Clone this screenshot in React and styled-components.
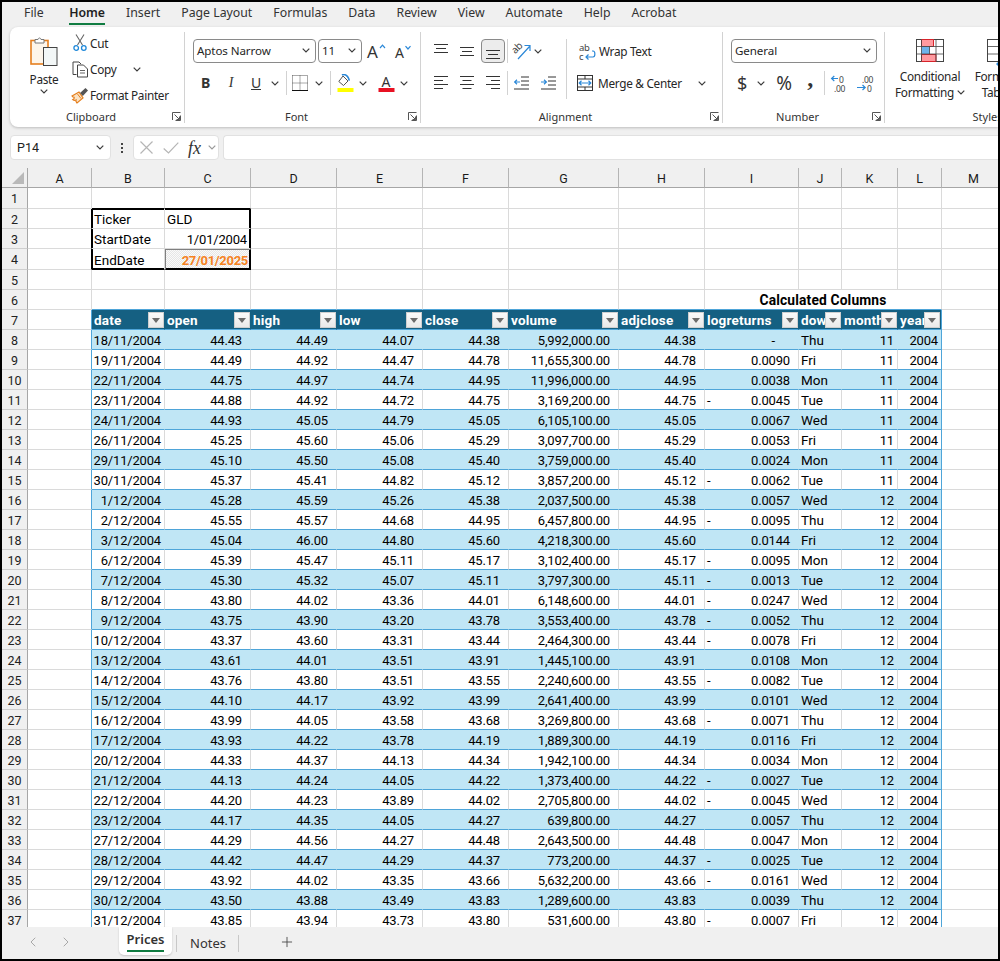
import React from "react";
import styled, { createGlobalStyle } from "styled-components";
import { ChevronLeft, ChevronRight, Plus } from "lucide-react";

const GRID = "26px 64px 73px 86px 86px 86px 86px 110px 86px 94px 43px 56px 44px 64px";
const LETTERS = "ABCDEFGHIJKLM".split("");
const HEADERS = ["date", "open", "high", "low", "close", "volume", "adjclose", "logreturns", "dow", "month", "year"];
const TABLE_LINE = "#4ea5d9";
const GRID_LINE = "#dadada";

// date|open|high|low|close|volume|logreturn|dow  (adjclose is the same as close here)
const DATA = `18/11/2004|44.43|44.49|44.07|44.38|5,992,000.00||Thu
19/11/2004|44.49|44.92|44.47|44.78|11,655,300.00|0.0090|Fri
22/11/2004|44.75|44.97|44.74|44.95|11,996,000.00|0.0038|Mon
23/11/2004|44.88|44.92|44.72|44.75|3,169,200.00|-0.0045|Tue
24/11/2004|44.93|45.05|44.79|45.05|6,105,100.00|0.0067|Wed
26/11/2004|45.25|45.60|45.06|45.29|3,097,700.00|0.0053|Fri
29/11/2004|45.10|45.50|45.08|45.40|3,759,000.00|0.0024|Mon
30/11/2004|45.37|45.41|44.82|45.12|3,857,200.00|-0.0062|Tue
1/12/2004|45.28|45.59|45.26|45.38|2,037,500.00|0.0057|Wed
2/12/2004|45.55|45.57|44.68|44.95|6,457,800.00|-0.0095|Thu
3/12/2004|45.04|46.00|44.80|45.60|4,218,300.00|0.0144|Fri
6/12/2004|45.39|45.47|45.11|45.17|3,102,400.00|-0.0095|Mon
7/12/2004|45.30|45.32|45.07|45.11|3,797,300.00|-0.0013|Tue
8/12/2004|43.80|44.02|43.36|44.01|6,148,600.00|-0.0247|Wed
9/12/2004|43.75|43.90|43.20|43.78|3,553,400.00|-0.0052|Thu
10/12/2004|43.37|43.60|43.31|43.44|2,464,300.00|-0.0078|Fri
13/12/2004|43.61|44.01|43.51|43.91|1,445,100.00|0.0108|Mon
14/12/2004|43.76|43.80|43.51|43.55|2,240,600.00|-0.0082|Tue
15/12/2004|44.10|44.17|43.92|43.99|2,641,400.00|0.0101|Wed
16/12/2004|43.99|44.05|43.58|43.68|3,269,800.00|-0.0071|Thu
17/12/2004|43.93|44.22|43.78|44.19|1,889,300.00|0.0116|Fri
20/12/2004|44.33|44.37|44.13|44.34|1,942,100.00|0.0034|Mon
21/12/2004|44.13|44.24|44.05|44.22|1,373,400.00|-0.0027|Tue
22/12/2004|44.20|44.23|43.89|44.02|2,705,800.00|-0.0045|Wed
23/12/2004|44.17|44.35|44.05|44.27|639,800.00|0.0057|Thu
27/12/2004|44.29|44.56|44.27|44.48|2,643,500.00|0.0047|Mon
28/12/2004|44.42|44.47|44.29|44.37|773,200.00|-0.0025|Tue
29/12/2004|43.92|44.02|43.35|43.66|5,632,200.00|-0.0161|Wed
30/12/2004|43.50|43.88|43.49|43.83|1,289,600.00|0.0039|Thu
31/12/2004|43.85|43.94|43.73|43.80|531,600.00|-0.0007|Fri`
  .split("\n")
  .map((line) => line.split("|"));

const GlobalStyle = createGlobalStyle`
  html, body {
    margin: 0;
    padding: 0;
    background: #f0f0f0;
  }
  * {
    box-sizing: border-box;
  }
`;

const Frame = styled.div`
  width: 1000px;
  height: 961px;
  border: 2px solid #000;
  background: #f0f0f0;
  display: flex;
  flex-direction: column;
  overflow: hidden;
  font-family: "Noto Sans", sans-serif;
  color: #262626;
`;

const MenuBar = styled.nav`
  height: 25px;
  flex: none;
  display: flex;
  align-items: flex-start;
  gap: 21px;
  padding: 3px 0 0 22px;
  font-size: 12.3px;
`;

const MenuItem = styled.div`
  height: 20px;
  line-height: 16px;
  margin-right: ${({ $first }) => ($first ? 4.5 : 0)}px;
  font-weight: ${({ $active }) => ($active ? 600 : 400)};
  color: ${({ $active }) => ($active ? "#1f1f1f" : "#333")};
  border-bottom: 2px solid ${({ $active }) => ($active ? "#107c41" : "transparent")};
`;

const Ribbon = styled.section`
  height: 100px;
  flex: none;
  margin-left: 8px;
  margin-bottom: 8px;
  padding: 5px 0 4px;
  display: flex;
  background: #fff;
  border-radius: 8px 0 0 8px;
  box-shadow: 0 1px 3px rgba(0, 0, 0, 0.22);
  overflow: hidden;
  letter-spacing: -0.3px;
`;

const Group = styled.div`
  width: ${({ $w }) => $w}px;
  flex: none;
  display: flex;
  flex-direction: column;
  border-right: 1px solid ${({ $last }) => ($last ? "transparent" : "#d2d2d2")};
`;

const GroupBody = styled.div`
  flex: 1;
  min-height: 0;
  display: flex;
  padding-left: ${({ $pl }) => $pl || 0}px;
  padding-top: ${({ $pt }) => $pt || 0}px;
`;

const GroupFoot = styled.div`
  height: 14px;
  flex: none;
  display: flex;
  align-items: center;
  padding-right: 3px;
`;

const GroupLabel = styled.div`
  flex: 1;
  text-align: center;
  font-size: 11px;
  letter-spacing: 0;
  color: #333;
`;

const PasteButton = styled.div`
  width: 40px;
  margin-left: 14px;
  padding-top: 4px;
  display: flex;
  flex-direction: column;
  align-items: center;
  font-size: 11.8px;
`;

const PasteText = styled.div`
  margin-top: 3px;
  line-height: 20px;
`;

const SmallColumn = styled.div`
  margin-left: 6px;
  display: flex;
  flex-direction: column;
  gap: 4px;
`;

const SmallButton = styled.div`
  height: 22px;
  display: flex;
  align-items: center;
  font-size: 11.8px;
  white-space: nowrap;
`;

const IconSlot = styled.div`
  width: ${({ $w }) => $w}px;
  height: ${({ $h }) => $h || 24}px;
  margin-left: ${({ $ml }) => $ml || 0}px;
  flex: none;
  display: flex;
  align-items: center;
  justify-content: center;
  color: #333;
  background: ${({ $on }) => ($on ? "#ececec" : "transparent")};
  border: ${({ $on }) => ($on ? "1px solid #8a8a8a" : "none")};
  border-radius: 4px;
`;

const Glyph = styled.span`
  font-family: ${({ $serif }) => ($serif ? '"Liberation Serif", serif' : '"Noto Sans", sans-serif')};
  font-size: ${({ $size }) => $size}px;
  font-weight: ${({ $bold }) => ($bold ? 700 : 400)};
  font-style: ${({ $italic }) => ($italic ? "italic" : "normal")};
  text-decoration: ${({ $under }) => ($under ? "underline" : "none")};
  line-height: 1;
  transform: translateY(${({ $lift }) => -($lift || 0)}px);
`;

const Stack = styled.div`
  display: flex;
  flex-direction: column;
  gap: ${({ $gap }) => $gap || 0}px;
`;

const ToolRow = styled.div`
  height: ${({ $h }) => $h || 24}px;
  display: flex;
  align-items: center;
`;

const Combo = styled.div`
  width: ${({ $w }) => $w}px;
  height: 24px;
  margin-left: ${({ $ml }) => $ml || 0}px;
  flex: none;
  padding: 0 5px 2px 3px;
  display: flex;
  align-items: center;
  justify-content: space-between;
  border: 1px solid #8a8a8a;
  border-radius: 4px;
  font-size: 11.6px;
  letter-spacing: -0.1px;
`;

const VLine = styled.div`
  width: 1px;
  height: ${({ $h }) => $h || 24}px;
  margin-left: ${({ $ml }) => $ml || 0}px;
  flex: none;
  background: #d2d2d2;
`;

const WideText = styled.span`
  margin-left: ${({ $ml }) => $ml || 0}px;
  font-size: 11.8px;
  white-space: nowrap;
`;

const BigButton = styled.div`
  width: ${({ $w }) => $w}px;
  margin-left: ${({ $ml }) => $ml || 0}px;
  flex: none;
  display: flex;
  flex-direction: column;
  align-items: center;
  font-size: 11.8px;
  line-height: 16px;
  white-space: nowrap;
`;

const BigIcon = styled.div`
  height: 29px;
`;

const BigLine = styled.div`
  display: flex;
  align-items: center;
  gap: 3px;
`;

const FormulaBar = styled.div`
  height: 25px;
  flex: none;
  margin-left: 8px;
  margin-bottom: 8px;
  display: flex;
  align-items: stretch;
`;

const FormulaBox = styled.div`
  width: ${({ $w }) => $w || 0}px;
  flex: ${({ $grow }) => ($grow ? 1 : "none")};
  margin-left: ${({ $ml }) => $ml || 0}px;
  display: flex;
  align-items: center;
  background: #fff;
  border: 1px solid #e1e1e1;
  border-right: ${({ $grow }) => ($grow ? "none" : "1px solid #e1e1e1")};
  border-radius: ${({ $grow }) => ($grow ? "4px 0 0 4px" : "4px")};
`;

const NameText = styled.span`
  flex: 1;
  padding-left: 6px;
  font-family: Roboto, sans-serif;
  font-size: 12.5px;
  color: #222;
`;

const Dots = styled.div`
  width: 3px;
  margin-left: 10px;
  align-self: center;
  display: flex;
  flex-direction: column;
  gap: 2px;
`;

const Dot = styled.i`
  width: 2px;
  height: 2px;
  background: #444;
`;

const Sheet = styled.div`
  flex: 1;
  min-height: 0;
  overflow: hidden;
  background: #fff;
  font-family: Roboto, sans-serif;
  font-size: 13px;
  letter-spacing: -0.18px;
  color: #000;
`;

const Row = styled.div`
  height: ${({ $h }) => $h || 20}px;
  display: grid;
  grid-template-columns: ${GRID};
`;

const Corner = styled.div`
  background: #f0f0f0;
  border-right: 1px solid #a6a6a6;
  border-bottom: 1px solid #a6a6a6;
  display: flex;
  align-items: flex-end;
  justify-content: flex-end;
  padding: 0 3px 3px 0;
`;

const ColHead = styled.div`
  background: #f0f0f0;
  border-right: 1px solid #b4b4b4;
  border-bottom: 1px solid #a6a6a6;
  padding-top: 1px;
  display: flex;
  align-items: center;
  justify-content: center;
  font-size: 12.5px;
  letter-spacing: 0;
  color: #1a1a1a;
`;

const RowHead = styled.div`
  background: #f0f0f0;
  border-right: 1px solid #a6a6a6;
  border-bottom: 1px solid #cfcfcf;
  padding-top: 1px;
  display: flex;
  align-items: center;
  justify-content: center;
  font-size: 12.5px;
  letter-spacing: 0;
  color: #222;
`;

const Cell = styled.div`
  min-width: 0;
  grid-column: ${({ $span }) => ($span ? `span ${$span}` : "auto")};
  display: flex;
  align-items: center;
  justify-content: ${({ $align }) => $align || "flex-start"};
  padding: 1px ${({ $pr }) => $pr ?? 2}px 0 ${({ $pl }) => $pl ?? 2}px;
  white-space: nowrap;
  overflow: hidden;
  font-weight: ${({ $bold }) => ($bold ? 700 : 400)};
  background: ${({ $fill }) => $fill || "#fff"};
  border-right: 1px solid ${({ $rb }) => $rb || GRID_LINE};
  border-bottom: 1px solid ${({ $bb }) => $bb || GRID_LINE};
  box-shadow: ${({ $frame }) => $frame || "none"};
`;

const TextCell = styled(Cell)`
  font-size: 13.5px;
  letter-spacing: 0;
`;

const TitleCell = styled(Cell)`
  justify-content: center;
  font-size: 13.8px;
  font-weight: 700;
  letter-spacing: 0.15px;
`;

const InputCell = styled(Cell)`
  justify-content: flex-end;
  padding-right: 2px;
  color: #f5821f;
  font-weight: 700;
  letter-spacing: -0.3px;
  background: repeating-conic-gradient(#e6e6e6 0 25%, #fafafa 0 50%) 0 0 / 2px 2px;
  border-left: 1px solid #7f7f7f;
  border-top: 1px solid #7f7f7f;
`;

const HeadCell = styled(Cell)`
  position: relative;
  padding: 1px 0 0 2px;
  background: #156082;
  color: #fff;
  font-size: 13.5px;
  font-weight: 700;
  letter-spacing: 0.2px;
  border-right: 1px solid ${({ $last }) => ($last ? TABLE_LINE : "#156082")};
  border-bottom: 1px solid ${TABLE_LINE};
`;

const FilterButton = styled.div`
  position: absolute;
  right: ${({ $last }) => ($last ? 1 : 0)}px;
  top: 2px;
  width: 16px;
  height: 16px;
  display: flex;
  align-items: center;
  justify-content: center;
  background: linear-gradient(#fafafa, #e9e9e9);
  border: 1px solid #cfcfcf;
`;

const FilterArrow = styled.i`
  width: 0;
  height: 0;
  border-left: 4px solid transparent;
  border-right: 4px solid transparent;
  border-top: 5px solid #6b6b6b;
`;

const Dash = styled.span`
  margin-right: auto;
`;

const TabBar = styled.div`
  height: 32px;
  flex: none;
  display: flex;
  align-items: flex-start;
  background: #f0f0f0;
  font-size: 13px;
`;

const NavArrow = styled.div`
  width: 33px;
  height: 30px;
  flex: none;
  margin-left: ${({ $ml }) => $ml || 0}px;
  display: flex;
  align-items: center;
  justify-content: center;
  color: #a3a3a3;
`;

const ActiveTab = styled.div`
  width: 53px;
  height: 28px;
  margin-left: 37px;
  flex: none;
  display: flex;
  flex-direction: column;
  align-items: center;
  padding-top: 3px;
  background: #fff;
  border-radius: 0 0 5px 5px;
  box-shadow: 0 1px 2px rgba(0, 0, 0, 0.18);
  font-weight: 600;
  line-height: 18px;
  color: #333;
`;

const TabLine = styled.i`
  width: 37px;
  height: 2px;
  margin-top: 2px;
  background: #107c41;
`;

const TabSep = styled.div`
  width: 1px;
  height: 17px;
  margin: 8px 0 0 ${({ $ml }) => $ml}px;
  flex: none;
  background: #c8c8c8;
`;

const PlainTab = styled.div`
  margin: 6px 0 0 13px;
  line-height: 20px;
  color: #333;
`;

const AddSheet = styled.div`
  margin: 7px 0 0 40px;
  height: 16px;
  color: #444;
`;

const Chevron = ({ color = "#3c3c3c" }) => (
  <svg width="8" height="5" viewBox="0 0 8 5">
    <path d="M0.7 0.7 4 4 7.3 0.7" fill="none" stroke={color} strokeWidth="1.2" />
  </svg>
);

const Launcher = () => (
  <svg width="9" height="9" viewBox="0 0 9 9">
    <path d="M0.5 8V0.5H8.5M8.5 3.5V8.5H3.5M2.5 2.5 7.5 7.5M7.5 4.5V7.5H4.5" fill="none" stroke="#555" strokeWidth="1" />
  </svg>
);

const PasteIcon = () => (
  <svg width="28" height="30" viewBox="0 0 28 30">
    <rect x="1" y="4.5" width="17" height="23.5" fill="#fdf5ea" stroke="#e57f1e" strokeWidth="1.6" />
    <path d="M5 7V3.5H8C8.3 1.5 10.7 1.5 11 3.5H14V7Z" fill="#fff" stroke="#777" strokeWidth="1" />
    <rect x="13.5" y="11.5" width="13.5" height="18" fill="#f3f7f7" stroke="#444" strokeWidth="1" />
  </svg>
);

const CutIcon = () => (
  <svg width="14" height="18" viewBox="0 0 14 18">
    <path d="M3 0.5 9.5 11M11 0.5 4.5 11" fill="none" stroke="#666" strokeWidth="1.1" />
    <circle cx="3.2" cy="14" r="2.3" fill="none" stroke="#1e88d9" strokeWidth="1.3" />
    <circle cx="10.8" cy="14" r="2.3" fill="none" stroke="#1e88d9" strokeWidth="1.3" />
  </svg>
);

const CopyIcon = () => (
  <svg width="17" height="17" viewBox="0 0 17 17">
    <path d="M4.5 13.5H1V1H7L9 3" fill="none" stroke="#444" strokeWidth="1" />
    <path d="M5.5 4H11.5L15.5 8V16H5.5Z" fill="#fff" stroke="#444" strokeWidth="1" />
    <path d="M8 9.5H13M8 12H13" stroke="#666" strokeWidth="1" />
  </svg>
);

const PainterIcon = () => (
  <svg width="18" height="17" viewBox="0 0 18 17">
    <path d="M1 9 8 5 12 11 6 16C5 15 4.6 14 5 13 3.6 13.6 2.6 13.4 1.8 12.6 3 12.2 3.4 11.4 3.2 10.4 2.6 10.4 1.6 10 1 9Z" fill="#fbe3c4" stroke="#e57f1e" strokeWidth="1.2" />
    <path d="M9 6 14.5 1 17 3.5 11.8 9Z" fill="#555" />
    <path d="M6.5 7 10 11.5" stroke="#e57f1e" strokeWidth="1" />
  </svg>
);

const ResizeA = ({ up }) => (
  <svg width="22" height="22" viewBox="0 0 22 22" overflow="visible">
    <text x={up ? 1 : 3} y="18" fontFamily="Noto Sans, sans-serif" fontSize={up ? 17 : 14} fill="#333">A</text>
    <path d={up ? "M14 8 16.5 5.2 19 8" : "M13.5 6.2 16 9 18.5 6.2"} fill="none" stroke="#2b88d8" strokeWidth="1.2" />
  </svg>
);

const BorderIcon = () => (
  <svg width="16" height="16" viewBox="0 0 16 16">
    <path d="M0.5 0.5H15.5V15M0.5 0.5V15M0.5 8H15.5M8 0.5V15" fill="none" stroke="#555" strokeWidth="1" strokeDasharray="1 1" />
    <path d="M0 15.5H16" stroke="#111" strokeWidth="1.2" />
  </svg>
);

const FillIcon = () => (
  <svg width="17" height="18" viewBox="0 0 17 18">
    <path d="M6 2 1.8 7.5 6.5 11.5 11 7Z" fill="#fff" stroke="#555" strokeWidth="1" />
    <path d="M5 1C6.5 0 9 0.6 10.5 2.6 11.4 3.8 12 5 12.3 6.6" fill="none" stroke="#2b88d8" strokeWidth="1.6" />
    <rect x="0.5" y="14" width="16" height="4" fill="#ffff00" />
  </svg>
);

const FontColorIcon = () => (
  <svg width="17" height="18" viewBox="0 0 17 18" overflow="visible">
    <text x="3.5" y="12.5" fontFamily="Noto Sans, sans-serif" fontSize="14" fill="#333">A</text>
    <rect x="0.5" y="14" width="16" height="4" fill="#e81123" />
  </svg>
);

const LinesIcon = ({ lines, h = 20 }) => (
  <svg width="14" height={h} viewBox={`0 0 14 ${h}`}>
    {lines.map(([x1, x2, y]) => (
      <path key={y} d={`M${x1} ${y}H${x2}`} stroke="#333" strokeWidth="1" />
    ))}
  </svg>
);

const OrientIcon = () => (
  <svg width="18" height="19" viewBox="0 0 18 19" overflow="visible">
    <text x="0" y="9" fontFamily="Noto Sans, sans-serif" fontSize="10" fill="#444" transform="rotate(-45 5 8)">ab</text>
    <path d="M5 17 16.5 4.5M11.5 3.5H17V9" fill="none" stroke="#2b88d8" strokeWidth="1.2" />
  </svg>
);

const IndentIcon = ({ right }) => (
  <svg width="15" height="14" viewBox="0 0 15 14">
    <path d="M7 1H15M7 5H15M7 9H15M0 13H15" stroke="#333" strokeWidth="1" />
    <path d={right ? "M0 6H5M3 3.8 5.4 6 3 8.2" : "M6 6H1M3 3.8 0.6 6 3 8.2"} fill="none" stroke="#2b88d8" strokeWidth="1.2" />
  </svg>
);

const WrapIcon = () => (
  <svg width="17" height="19" viewBox="0 0 17 19" overflow="visible">
    <text x="0" y="8.5" fontFamily="Noto Sans, sans-serif" fontSize="9.5" fill="#444">ab</text>
    <text x="0" y="17.5" fontFamily="Noto Sans, sans-serif" fontSize="9.5" fill="#444">c</text>
    <path d="M13 9H14C16.5 9 16.5 15 14 15H7M9.5 12.5 7 15 9.5 17.5" fill="none" stroke="#2b88d8" strokeWidth="1.2" />
  </svg>
);

const MergeIcon = () => (
  <svg width="16" height="16" viewBox="0 0 16 16">
    <rect x="0.5" y="0.5" width="15" height="15" fill="#fff" stroke="#333" />
    <path d="M0.5 4H15.5M0.5 12H15.5M8 0.5V4M8 12V15.5" stroke="#333" strokeWidth="1" />
    <path d="M2 8H14M4.5 5.8 2.2 8 4.5 10.2M11.5 5.8 13.8 8 11.5 10.2" fill="none" stroke="#2b88d8" strokeWidth="1.2" />
  </svg>
);

const DecimalIcon = ({ more }) => (
  <svg width="17" height="17" viewBox="0 0 17 17" overflow="visible">
    <text x={more ? 5 : 8} y="7.5" fontFamily="Noto Sans, sans-serif" fontSize="8.5" fill="#444">{more ? ".00" : "0"}</text>
    <text x={more ? 10 : 3} y="16.5" fontFamily="Noto Sans, sans-serif" fontSize="8.5" fill="#444">{more ? "0" : ".00"}</text>
    <path
      d={more ? "M0 12.5H8M5.5 10 8.2 12.5 5.5 15" : "M7 3.5H0.8M3.3 1 0.6 3.5 3.3 6"}
      fill="none"
      stroke="#2b88d8"
      strokeWidth="1.2"
    />
  </svg>
);

const CondFormatIcon = () => (
  <svg width="28" height="23" viewBox="0 0 28 23">
    <rect x="0.5" y="0.5" width="27" height="22" fill="#fff" stroke="#444" />
    <path d="M5.5 0.5H17.5V7.5H5.5ZM5.5 15.5H20V22.5H5.5Z" fill="#ff9a9f" stroke="#d8232a" />
    <rect x="5.5" y="7.5" width="8" height="7.5" fill="#6db3ea" />
    <path d="M0.5 7.5H27.5M0.5 15H27.5M5.5 0.5V22.5M13.5 7.5V15M20 0.5V22.5" stroke="#444" strokeWidth="0.8" fill="none" />
  </svg>
);

const TableIcon = () => (
  <svg width="28" height="28" viewBox="0 0 28 28">
    <rect x="0.5" y="0.5" width="27" height="22" fill="#fff" stroke="#444" />
    <rect x="14" y="8" width="14" height="14" fill="#6db3ea" />
    <path d="M0.5 7.5H27.5M0.5 15H27.5M14 0.5V22.5" stroke="#444" strokeWidth="0.8" />
    <path d="M10 26 20 16" stroke="#2b88d8" strokeWidth="3" />
  </svg>
);

const CrossIcon = () => (
  <svg width="13" height="13" viewBox="0 0 13 13">
    <path d="M0.5 0.5 12.5 12.5M12.5 0.5 0.5 12.5" stroke="#b5b5b5" strokeWidth="1.2" />
  </svg>
);

const CheckIcon = () => (
  <svg width="16" height="12" viewBox="0 0 16 12">
    <path d="M0.7 6.5 5.5 11 15.3 0.7" fill="none" stroke="#b5b5b5" strokeWidth="1.2" />
  </svg>
);

const SelectAll = () => (
  <svg width="12" height="12" viewBox="0 0 12 12">
    <path d="M12 0V12H0Z" fill="#b9b9b9" />
  </svg>
);

const BlankRow = ({ number, h, over = {} }) => (
  <Row $h={h}>
    <RowHead>{number}</RowHead>
    {LETTERS.map((letter) => (
      <Cell key={letter} {...(over[letter] || {})} />
    ))}
  </Row>
);

const Filter = ({ last }) => (
  <FilterButton $last={last}>
    <FilterArrow />
  </FilterButton>
);

const DataRow = ({ number, cells, band }) => {
  const [date, open, high, low, close, volume, log, dow] = cells;
  const [, month, year] = date.split("/");
  const fill = band ? "#c0e6f5" : "#fff";
  const line = band ? "#c0e6f5" : GRID_LINE;
  const neg = log.startsWith("-");
  const common = { $fill: fill, $rb: line, $bb: TABLE_LINE };
  return (
    <Row>
      <RowHead>{number}</RowHead>
      <Cell $rb={TABLE_LINE} />
      <Cell {...common} $align="flex-end" $pr={3}>{date}</Cell>
      {[open, high, low, close, volume, close].map((value, i) => (
        <Cell key={i} {...common} $align="flex-end" $pr={8}>{value}</Cell>
      ))}
      {log ? (
        <Cell {...common} $align="flex-end" $pr={8}>
          {neg && <Dash>-</Dash>}
          {log.replace("-", "")}
        </Cell>
      ) : (
        <Cell {...common} $align="flex-end" $pr={23}>-</Cell>
      )}
      <TextCell {...common}>{dow}</TextCell>
      <Cell {...common} $align="flex-end" $pr={3}>{Number(month)}</Cell>
      <Cell {...common} $align="flex-end" $pr={3} $rb={TABLE_LINE}>{year}</Cell>
      <Cell />
    </Row>
  );
};

export default function App() {
  return (
    <Frame>
      <GlobalStyle />
      <MenuBar>
        {["File", "Home", "Insert", "Page Layout", "Formulas", "Data", "Review", "View", "Automate", "Help", "Acrobat"].map((item) => (
          <MenuItem key={item} $first={item === "File"} $active={item === "Home"}>{item}</MenuItem>
        ))}
      </MenuBar>

      <Ribbon>
        <Group $w={175}>
          <GroupBody>
            <PasteButton>
              <PasteIcon />
              <PasteText>Paste</PasteText>
              <Chevron />
            </PasteButton>
            <SmallColumn>
              <SmallButton>
                <IconSlot $w={20} $h={22}><CutIcon /></IconSlot>
                Cut
              </SmallButton>
              <SmallButton>
                <IconSlot $w={20} $h={22}><CopyIcon /></IconSlot>
                Copy
                <IconSlot $w={8} $h={22} $ml={17}><Chevron /></IconSlot>
              </SmallButton>
              <SmallButton>
                <IconSlot $w={20} $h={22}><PainterIcon /></IconSlot>
                Format Painter
              </SmallButton>
            </SmallColumn>
          </GroupBody>
          <GroupFoot>
            <GroupLabel>Clipboard</GroupLabel>
            <Launcher />
          </GroupFoot>
        </Group>

        <Group $w={236}>
          <GroupBody $pl={8} $pt={7}>
            <Stack $gap={8}>
              <ToolRow>
                <Combo $w={123}>Aptos Narrow<Chevron /></Combo>
                <Combo $w={44} $ml={2}>11<Chevron /></Combo>
                <IconSlot $w={26} $ml={2}><ResizeA up /></IconSlot>
                <IconSlot $w={24} $ml={1}><ResizeA /></IconSlot>
              </ToolRow>
              <ToolRow>
                <IconSlot $w={25}><Glyph $size={14} $bold>B</Glyph></IconSlot>
                <IconSlot $w={26}><Glyph $size={14} $italic $serif>I</Glyph></IconSlot>
                <IconSlot $w={24}><Glyph $size={14} $under>U</Glyph></IconSlot>
                <IconSlot $w={14}><Chevron /></IconSlot>
                <VLine $ml={4} />
                <IconSlot $w={26}><BorderIcon /></IconSlot>
                <IconSlot $w={12}><Chevron /></IconSlot>
                <VLine $ml={5} />
                <IconSlot $w={28}><FillIcon /></IconSlot>
                <IconSlot $w={8}><Chevron /></IconSlot>
                <IconSlot $w={28} $ml={5}><FontColorIcon /></IconSlot>
                <IconSlot $w={8}><Chevron /></IconSlot>
              </ToolRow>
            </Stack>
          </GroupBody>
          <GroupFoot>
            <GroupLabel>Font</GroupLabel>
            <Launcher />
          </GroupFoot>
        </Group>

        <Group $w={302}>
          <GroupBody $pl={7} $pt={7}>
            <Stack $gap={8}>
              <ToolRow>
                <IconSlot $w={26}><LinesIcon lines={[[0, 14, 3.5], [2, 12, 7.5], [0, 14, 11.5]]} /></IconSlot>
                <IconSlot $w={26}><LinesIcon lines={[[0, 14, 6.5], [2, 12, 10.5], [0, 14, 14.5]]} /></IconSlot>
                <IconSlot $w={24} $ml={1} $on><LinesIcon lines={[[0, 14, 9.5], [2, 12, 13.5], [0, 14, 17.5]]} /></IconSlot>
                <VLine $ml={2} />
                <IconSlot $w={28}><OrientIcon /></IconSlot>
                <IconSlot $w={8} $ml={-2}><Chevron /></IconSlot>
              </ToolRow>
              <ToolRow>
                <IconSlot $w={26}><LinesIcon h={16} lines={[[0, 14, 1.5], [0, 9, 5.5], [0, 14, 9.5], [0, 9, 13.5]]} /></IconSlot>
                <IconSlot $w={26}><LinesIcon h={16} lines={[[0, 14, 1.5], [2.5, 11.5, 5.5], [0, 14, 9.5], [2.5, 11.5, 13.5]]} /></IconSlot>
                <IconSlot $w={24} $ml={1}><LinesIcon h={16} lines={[[0, 14, 1.5], [5, 14, 5.5], [0, 14, 9.5], [5, 14, 13.5]]} /></IconSlot>
                <VLine $ml={2} />
                <IconSlot $w={26}><IndentIcon /></IconSlot>
                <IconSlot $w={26} $ml={1}><IndentIcon right /></IconSlot>
              </ToolRow>
            </Stack>
            <VLine $h={60} $ml={5} />
            <Stack $gap={8}>
              <ToolRow>
                <IconSlot $w={17} $ml={12}><WrapIcon /></IconSlot>
                <WideText $ml={3}>Wrap Text</WideText>
              </ToolRow>
              <ToolRow>
                <IconSlot $w={16} $ml={10}><MergeIcon /></IconSlot>
                <WideText $ml={5}>Merge &amp; Center</WideText>
                <IconSlot $w={8} $ml={16}><Chevron /></IconSlot>
              </ToolRow>
            </Stack>
          </GroupBody>
          <GroupFoot>
            <GroupLabel>Alignment</GroupLabel>
            <Launcher />
          </GroupFoot>
        </Group>

        <Group $w={162}>
          <GroupBody $pl={8} $pt={7}>
            <Stack $gap={8}>
              <ToolRow>
                <Combo $w={146}>General<Chevron /></Combo>
              </ToolRow>
              <ToolRow>
                <IconSlot $w={22}><Glyph $size={18}>$</Glyph></IconSlot>
                <IconSlot $w={8} $ml={4}><Chevron /></IconSlot>
                <IconSlot $w={28} $ml={5}><Glyph $size={19}>%</Glyph></IconSlot>
                <IconSlot $w={24}><Glyph $size={24} $bold $serif $lift={5}>,</Glyph></IconSlot>
                <VLine $ml={2} />
                <IconSlot $w={28}><DecimalIcon /></IconSlot>
                <IconSlot $w={24}><DecimalIcon more /></IconSlot>
              </ToolRow>
            </Stack>
          </GroupBody>
          <GroupFoot>
            <GroupLabel>Number</GroupLabel>
            <Launcher />
          </GroupFoot>
        </Group>

        <Group $w={218} $last>
          <GroupBody $pl={10} $pt={7}>
            <BigButton $w={70}>
              <BigIcon><CondFormatIcon /></BigIcon>
              <div>Conditional</div>
              <BigLine>Formatting<Chevron /></BigLine>
            </BigButton>
            <BigButton $w={60} $ml={6}>
              <BigIcon><TableIcon /></BigIcon>
              <div>Format as</div>
              <BigLine>Table<Chevron /></BigLine>
            </BigButton>
          </GroupBody>
          <GroupFoot>
            <GroupLabel>Styles</GroupLabel>
            <Launcher />
          </GroupFoot>
        </Group>
      </Ribbon>

      <FormulaBar>
        <FormulaBox $w={101}>
          <NameText>P14</NameText>
          <IconSlot $w={20} $h={22}><Chevron /></IconSlot>
        </FormulaBox>
        <Dots><Dot /><Dot /><Dot /></Dots>
        <FormulaBox $w={86} $ml={9}>
          <IconSlot $w={25} $h={22}><CrossIcon /></IconSlot>
          <IconSlot $w={24} $h={22}><CheckIcon /></IconSlot>
          <IconSlot $w={23} $h={22}><Glyph $size={18} $italic $serif>fx</Glyph></IconSlot>
          <IconSlot $w={12} $h={22}><Chevron color="#999" /></IconSlot>
        </FormulaBox>
        <FormulaBox $grow $ml={4} />
      </FormulaBar>

      <Sheet>
        <Row>
          <Corner><SelectAll /></Corner>
          {LETTERS.map((letter) => (
            <ColHead key={letter}>{letter}</ColHead>
          ))}
        </Row>
        <BlankRow number={1} h={21} over={{ B: { $bb: "#000" }, C: { $bb: "#000" } }} />
        <Row>
          <RowHead>2</RowHead>
          <Cell $rb="#000" />
          <TextCell $frame="inset 1px 1px 0 #000">Ticker</TextCell>
          <TextCell $rb="#000" $frame="inset -1px 1px 0 #000">GLD</TextCell>
          {LETTERS.slice(3).map((letter) => <Cell key={letter} />)}
        </Row>
        <Row>
          <RowHead>3</RowHead>
          <Cell $rb="#000" />
          <TextCell $frame="inset 1px 0 0 #000">StartDate</TextCell>
          <Cell $rb="#000" $align="flex-end" $pr={3} $frame="inset -1px 0 0 #000">1/01/2004</Cell>
          {LETTERS.slice(3).map((letter) => <Cell key={letter} />)}
        </Row>
        <Row $h={21}>
          <RowHead>4</RowHead>
          <Cell $rb="#000" />
          <TextCell $bb="#000" $frame="inset 1px -1px 0 #000">EndDate</TextCell>
          <InputCell $rb="#000" $bb="#000" $frame="inset -1px -1px 0 #000">27/01/2025</InputCell>
          {LETTERS.slice(3).map((letter) => <Cell key={letter} />)}
        </Row>
        <BlankRow number={5} />
        <Row>
          <RowHead>6</RowHead>
          <Cell />
          {LETTERS.slice(1, 8).map((letter) => <Cell key={letter} $bb={TABLE_LINE} />)}
          <TitleCell $span={4} $bb={TABLE_LINE}>Calculated Columns</TitleCell>
          <Cell />
        </Row>
        <Row>
          <RowHead>7</RowHead>
          <Cell $rb={TABLE_LINE} />
          {HEADERS.map((name, i) => (
            <HeadCell key={name} $last={i === HEADERS.length - 1}>
              {name}
              <Filter last={i === HEADERS.length - 1} />
            </HeadCell>
          ))}
          <Cell />
        </Row>
        {DATA.map((cells, i) => (
          <DataRow key={cells[0]} number={i + 8} cells={cells} band={i % 2 === 0} />
        ))}
      </Sheet>

      <TabBar>
        <NavArrow $ml={14}><ChevronLeft size={16} strokeWidth={1.4} /></NavArrow>
        <NavArrow><ChevronRight size={16} strokeWidth={1.4} /></NavArrow>
        <ActiveTab>
          Prices
          <TabLine />
        </ActiveTab>
        <TabSep $ml={4} />
        <PlainTab>Notes</PlainTab>
        <TabSep $ml={12} />
        <AddSheet><Plus size={16} strokeWidth={1.3} /></AddSheet>
      </TabBar>
    </Frame>
  );
}
